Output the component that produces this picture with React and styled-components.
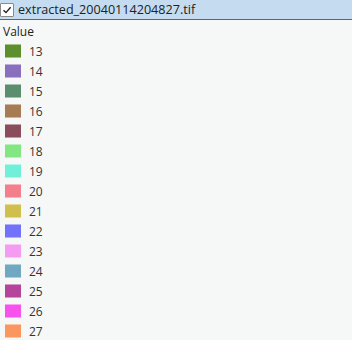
import React from "react";
import styled, { createGlobalStyle } from "styled-components";

const Global = createGlobalStyle`
  html, body { margin: 0; padding: 0; background: #f6f8f7; }
  body { font-family: "Open Sans", "Noto Sans", sans-serif; }
`;

const Panel = styled.div`
  width: 352px;
  height: 340px;
  overflow: hidden;
  background: #f6f8f7;
`;

const Header = styled.div`
  display: flex;
  align-items: center;
  gap: 4px;
  height: 19px;
  background: #c5dcf0;
  border-bottom: 1px solid #1f78b4;
`;

const Check = styled.div`
  width: 12px;
  height: 12px;
  background: #fff;
  border: 1px solid #8a8a8a;
  border-radius: 1px;
  display: flex;
  align-items: center;
  justify-content: center;
`;

const Title = styled.span`
  font-size: 12.6px;
  color: #222;
  line-height: 19px;
`;

const Label = styled.div`
  font-size: 12px;
  color: #222;
  padding: 3px 0 0 3px;
  height: 21px;
  box-sizing: border-box;
  line-height: 18px;
`;

const List = styled.div`
  display: flex;
  flex-direction: column;
  padding: 0 0 0 5px;
`;

const Row = styled.div`
  display: flex;
  align-items: center;
  gap: 8px;
  height: 20px;
`;

const Swatch = styled.div`
  width: 16px;
  height: 12px;
  background: ${(p) => p.$c};
  border-top: 1px solid rgba(255, 255, 255, 0.45);
  border-bottom: 1px solid rgba(255, 255, 255, 0.45);
`;

const Num = styled.span`
  font-size: 12px;
  color: #333;
`;

const items = [
  [13, "#5d8f2f"],
  [14, "#8a6fbf"],
  [15, "#5b8e6e"],
  [16, "#a67c55"],
  [17, "#8a4d5b"],
  [18, "#82e682"],
  [19, "#70f0d8"],
  [20, "#f47f8c"],
  [21, "#d0bf4c"],
  [22, "#7272fa"],
  [23, "#f49cf2"],
  [24, "#70a8c2"],
  [25, "#b4459a"],
  [26, "#f752ee"],
  [27, "#fa965e"],
];

export default function App() {
  return (
    <Panel>
      <Global />
      <Header>
        <Check>
          <svg width="10" height="10" viewBox="0 0 10 10">
            <path d="M1.5 5.2 L4 7.6 L8.6 2.2" fill="none" stroke="#222" strokeWidth="1.4" />
          </svg>
        </Check>
        <Title>extracted_20040114204827.tif</Title>
      </Header>
      <Label>Value</Label>
      <List>
        {items.map(([n, c]) => (
          <Row key={n}>
            <Swatch $c={c} />
            <Num>{n}</Num>
          </Row>
        ))}
      </List>
    </Panel>
  );
}
